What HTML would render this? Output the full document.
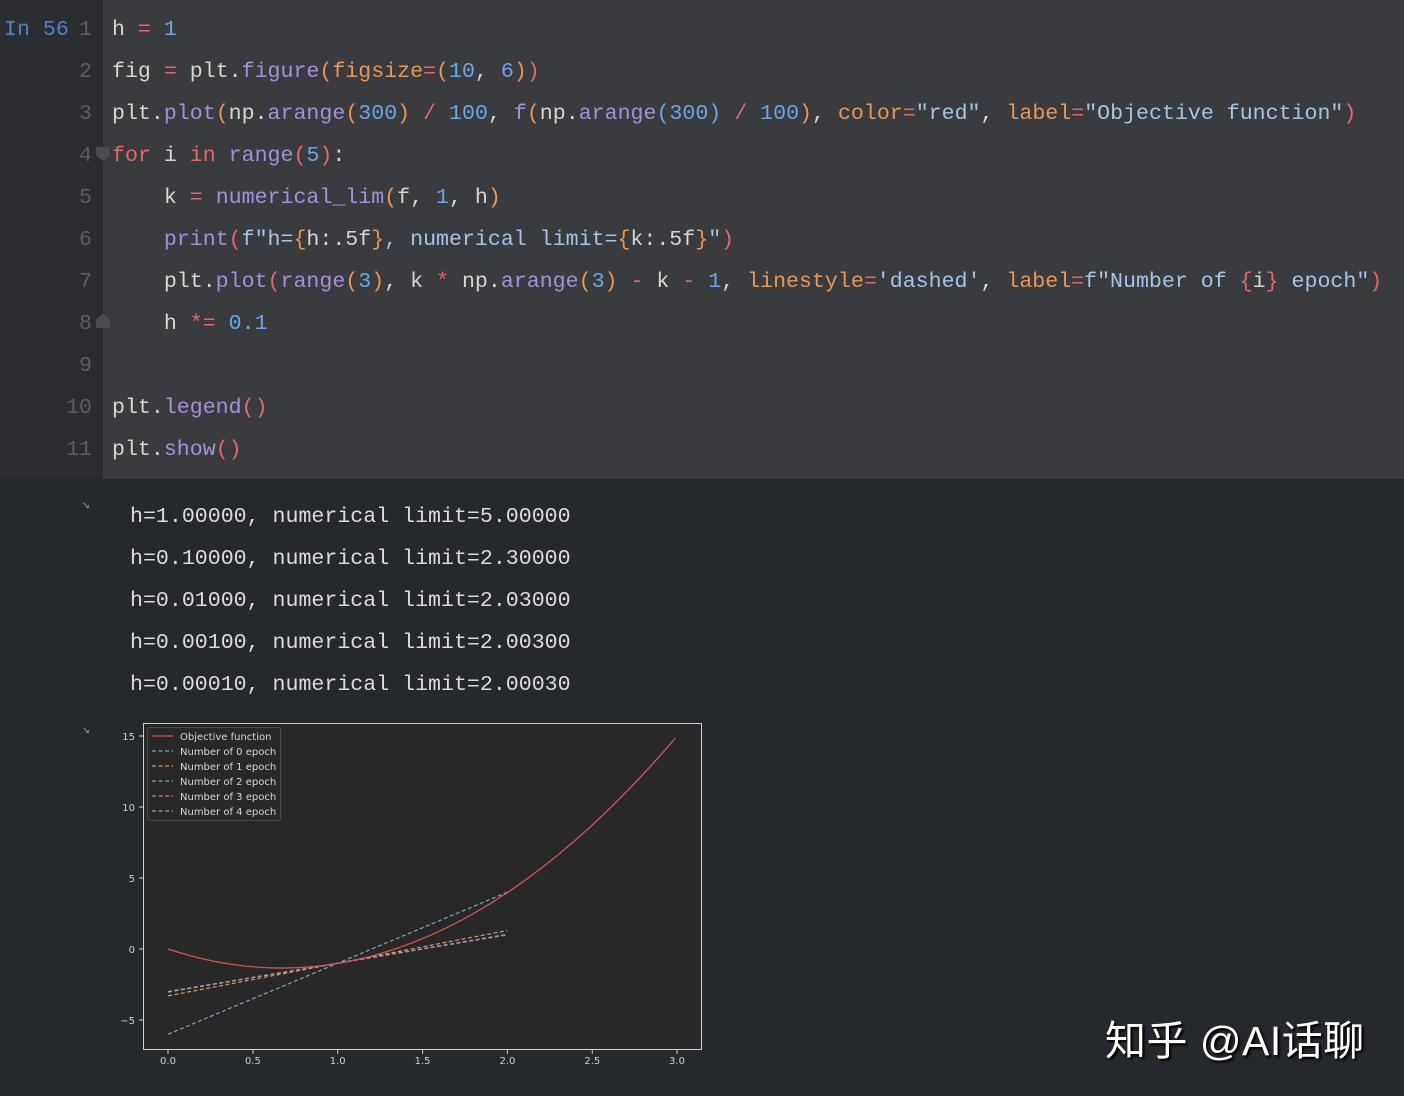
<!DOCTYPE html>
<html><head><meta charset="utf-8"><style>
body{margin:0;width:1404px;height:1096px;background:#25282c;position:relative;overflow:hidden;font-family:"Liberation Mono",monospace}
#gut{position:absolute;left:0;top:0;width:103px;height:479px;background:#2b2d30}
#code{position:absolute;left:103px;top:0;width:1301px;height:479px;background:#3a3b3e}
.ln{position:absolute;font-size:21.6px;line-height:42px;white-space:pre;color:#d6d6d6;margin-top:2px}
.num{color:#5b5e63;text-align:right;width:92px;left:0}
.c{left:112px}
.k{color:#e3676f}.f{color:#a78fd9}.n{color:#6aa6e8}.o{color:#e5985a}.s{color:#a6c4e6}.p{color:#e3676f}.q{color:#e5985a}.b{color:#8a93a8}
.out{position:absolute;left:130px;font-size:21.6px;line-height:42px;white-space:pre;color:#dcdcdc;margin-top:2px}
.arr{position:absolute;left:82px;color:#8a8f96;font-size:13px}
#wm{position:absolute;left:1105px;top:1007px;font-family:"Liberation Sans","Noto Sans CJK SC",sans-serif;font-size:41px;letter-spacing:0.5px;color:#fff;text-shadow:2px 2px 2px #000}
</style></head><body>
<div id="gut"></div><div id="code"></div>
<div class="ln" style="left:4px;top:7px;color:#4e83c8">In 56</div>
<div class="ln num" style="top:7px">1</div>
<div class="ln num" style="top:49px">2</div>
<div class="ln num" style="top:91px">3</div>
<div class="ln num" style="top:133px">4</div>
<div class="ln num" style="top:175px">5</div>
<div class="ln num" style="top:217px">6</div>
<div class="ln num" style="top:259px">7</div>
<div class="ln num" style="top:301px">8</div>
<div class="ln num" style="top:343px">9</div>
<div class="ln num" style="top:385px">10</div>
<div class="ln num" style="top:427px">11</div>
<div style="position:absolute;left:96px;top:147px;width:14px;height:14px;background:#4a4c50;clip-path:polygon(0 0,100% 0,100% 60%,50% 100%,0 60%)"></div>
<div style="position:absolute;left:96px;top:314px;width:14px;height:14px;background:#4a4c50;clip-path:polygon(50% 0,100% 40%,100% 100%,0 100%,0 40%)"></div>
<div class="ln c" style="top:7px">h <span class="k">=</span> <span class="n">1</span></div>
<div class="ln c" style="top:49px">fig <span class="k">=</span> plt.<span class="f">figure</span><span class="q">(</span><span class="o">figsize</span><span class="k">=</span><span class="q">(</span><span class="n">10</span>, <span class="n">6</span><span class="q">)</span><span class="p">)</span></div>
<div class="ln c" style="top:91px">plt.<span class="f">plot</span><span class="q">(</span>np.<span class="f">arange</span><span class="q">(</span><span class="n">300</span><span class="q">)</span> <span class="k">/</span> <span class="n">100</span>, <span class="f">f</span><span class="q">(</span>np.<span class="f">arange</span><span class="n">(300)</span> <span class="k">/</span> <span class="n">100</span><span class="q">)</span>, <span class="o">color</span><span class="k">=</span><span class="s">"red"</span>, <span class="o">label</span><span class="k">=</span><span class="s">"Objective function"</span><span class="p">)</span></div>
<div class="ln c" style="top:133px"><span class="k">for</span> i <span class="k">in</span> <span class="f">range</span><span class="p">(</span><span class="n">5</span><span class="p">)</span>:</div>
<div class="ln c" style="top:175px">    k <span class="k">=</span> <span class="f">numerical_lim</span><span class="q">(</span>f, <span class="n">1</span>, h<span class="q">)</span></div>
<div class="ln c" style="top:217px">    <span class="f">print</span><span class="p">(</span><span class="s">f"h=</span><span class="q">{</span>h:.5f<span class="q">}</span><span class="s">, numerical limit=</span><span class="q">{</span>k:.5f<span class="q">}</span><span class="s">"</span><span class="p">)</span></div>
<div class="ln c" style="top:259px">    plt.<span class="f">plot</span><span class="p">(</span><span class="f">range</span><span class="q">(</span><span class="n">3</span><span class="q">)</span>, k <span class="k">*</span> np.<span class="f">arange</span><span class="q">(</span><span class="n">3</span><span class="q">)</span> <span class="k">-</span> k <span class="k">-</span> <span class="n">1</span>, <span class="o">linestyle</span><span class="k">=</span><span class="s">'dashed'</span>, <span class="o">label</span><span class="k">=</span><span class="s">f"Number of </span><span class="p">{</span>i<span class="p">}</span><span class="s"> epoch"</span><span class="p">)</span></div>
<div class="ln c" style="top:301px">    h <span class="k">*=</span> <span class="n">0.1</span></div>
<div class="ln c" style="top:385px">plt.<span class="f">legend</span><span class="p">()</span></div>
<div class="ln c" style="top:427px">plt.<span class="f">show</span><span class="p">()</span></div>
<div class="arr" style="top:497px">↘</div>
<div class="arr" style="top:722px">↘</div>
<div class="out" style="top:494px">h=1.00000, numerical limit=5.00000</div>
<div class="out" style="top:536px">h=0.10000, numerical limit=2.30000</div>
<div class="out" style="top:578px">h=0.01000, numerical limit=2.03000</div>
<div class="out" style="top:620px">h=0.00100, numerical limit=2.00300</div>
<div class="out" style="top:662px">h=0.00010, numerical limit=2.00030</div>
<svg style="position:absolute;left:0;top:0" width="1404" height="1096" font-family="DejaVu Sans,sans-serif" font-size="10">
<rect x="143.5" y="723.5" width="558" height="326" fill="#282828" stroke="#cfcfcf" stroke-width="1"/>
<g stroke="#cfcfcf">
<line x1="168" y1="1050" x2="168" y2="1054"/><line x1="252.9" y1="1050" x2="252.9" y2="1054"/><line x1="337.7" y1="1050" x2="337.7" y2="1054"/><line x1="422.6" y1="1050" x2="422.6" y2="1054"/><line x1="507.4" y1="1050" x2="507.4" y2="1054"/><line x1="592.3" y1="1050" x2="592.3" y2="1054"/><line x1="677" y1="1050" x2="677" y2="1054"/>
<line x1="139" y1="736" x2="143" y2="736"/><line x1="139" y1="807" x2="143" y2="807"/><line x1="139" y1="878" x2="143" y2="878"/><line x1="139" y1="949" x2="143" y2="949"/><line x1="139" y1="1020" x2="143" y2="1020"/>
</g>
<g fill="#cfcfcf" text-anchor="middle">
<text x="168" y="1064">0.0</text><text x="252.9" y="1064">0.5</text><text x="337.7" y="1064">1.0</text><text x="422.6" y="1064">1.5</text><text x="507.4" y="1064">2.0</text><text x="592.3" y="1064">2.5</text><text x="677" y="1064">3.0</text>
</g>
<g fill="#cfcfcf" text-anchor="end">
<text x="135" y="740">15</text><text x="135" y="811">10</text><text x="135" y="882">5</text><text x="135" y="953">0</text><text x="135" y="1024">−5</text>
</g>
<g fill="none" stroke-width="1.2" stroke-dasharray="4,2.5">
<line x1="168" y1="1034.2" x2="507.4" y2="892.2" stroke="#7fa5c0"/>
<line x1="168" y1="995.9" x2="507.4" y2="930.5" stroke="#d49a5e"/>
<line x1="168" y1="992.1" x2="507.4" y2="934.3" stroke="#8fa88a"/>
<line x1="168" y1="991.7" x2="507.4" y2="934.7" stroke="#c97d7d"/>
<line x1="168" y1="991.6" x2="507.4" y2="934.8" stroke="#a09ab8"/>
</g>
<path d="M168 949 Q422.6 1034.2 675.4 738" fill="none" stroke="#d25555" stroke-width="1.3"/>
<rect x="147.5" y="727.5" width="133" height="93" rx="2" fill="#282828" stroke="#4a4a4a"/>
<g stroke-width="1.2">
<line x1="152" y1="736" x2="173" y2="736" stroke="#d25555"/>
<g stroke-dasharray="4,2.5"><line x1="152" y1="751" x2="173" y2="751" stroke="#7fa5c0"/>
<line x1="152" y1="766" x2="173" y2="766" stroke="#d49a5e"/>
<line x1="152" y1="781" x2="173" y2="781" stroke="#8fa88a"/>
<line x1="152" y1="796" x2="173" y2="796" stroke="#c97d7d"/>
<line x1="152" y1="811" x2="173" y2="811" stroke="#a09ab8"/></g>
</g>
<g fill="#d8d8d8">
<text x="180" y="740">Objective function</text><text x="180" y="755">Number of 0 epoch</text><text x="180" y="770">Number of 1 epoch</text><text x="180" y="785">Number of 2 epoch</text><text x="180" y="800">Number of 3 epoch</text><text x="180" y="815">Number of 4 epoch</text>
</g>
</svg>
<div id="wm">知乎 @AI话聊</div>
</body></html>
